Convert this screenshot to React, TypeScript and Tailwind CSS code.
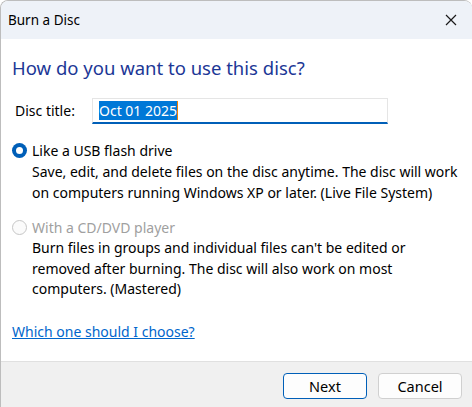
import React from "react";

const font = { fontFamily: '"Noto Sans", "Segoe UI", sans-serif' };

function RadioOn() {
  return (
    <span className="w-[15px] h-[15px] rounded-full bg-[#005fb8] flex items-center justify-center shrink-0">
      <span className="w-[7px] h-[7px] rounded-full bg-white" />
    </span>
  );
}

function RadioOff() {
  return <span className="w-[15px] h-[15px] rounded-full border border-[#c6c6c6] bg-[#fbfbfb] shrink-0" />;
}

export default function App() {
  return (
    <div
      className="w-[472px] h-[407px] flex flex-col bg-white rounded-t-[8px] border-t border-l border-[#bdbdbd] overflow-hidden text-[14px] text-black"
      style={font}
    >
      <div className="h-[38px] shrink-0 flex items-center justify-between pl-[7px] pr-[11px] bg-[#eef2f8]">
        <span className="text-[13.5px]">Burn a Disc</span>
        <svg width="12" height="12" viewBox="0 0 12 12" className="mr-[4px]">
          <path d="M1 1 L11 11 M11 1 L1 11" stroke="#1a1a1a" strokeWidth="1.2" />
        </svg>
      </div>

      <div className="flex-1 flex flex-col pl-[11px] pr-[8px]">
        <div className="mt-[15px] text-[18.5px] leading-[28px] text-[#1c3796]">How do you want to use this disc?</div>

        <div className="mt-[16px] flex items-center">
          <span className="ml-[3px] w-[77px] leading-[20px]">Disc title:</span>
          <div className="w-[296px] h-[26px] border border-[#e5e5e5] border-b-2 border-b-[#005fb8] flex items-center pl-[6px]">
            <span className="bg-[#0078d7] text-white leading-[19px] border-r border-[#f08000] text-[14px]">Oct 01 2025</span>
          </div>
        </div>

        <div className="mt-[16px] flex flex-col">
          <div className="flex items-center gap-[5px] leading-[21px]">
            <RadioOn />
            <span>Like a USB flash drive</span>
          </div>
          <div className="pl-[20px] leading-[21px]">
            Save, edit, and delete files on the disc anytime. The disc will work
            <br />
            on computers running Windows XP or later. (Live File System)
          </div>
        </div>

        <div className="mt-[14px] flex flex-col">
          <div className="flex items-center gap-[5px] leading-[21px] text-[#a0a0a0]">
            <RadioOff />
            <span>With a CD/DVD player</span>
          </div>
          <div className="pl-[20px] leading-[20.5px]">
            Burn files in groups and individual files can't be edited or
            <br />
            removed after burning. The disc will also work on most
            <br />
            computers. (Mastered)
          </div>
        </div>

        <a className="mt-[21px] text-[#0066cc] underline leading-[21px] w-fit">Which one should I choose?</a>
      </div>

      <div className="h-[46px] shrink-0 border-t border-[#e0e0e0] bg-[#f0f0f0] flex items-start justify-end gap-[11px] pr-[10px] pt-[11px]">
        <button className="w-[84px] h-[26px] rounded-[4px] bg-[#fdfdfd] border border-[#005fb8] text-[14.5px] leading-none">Next</button>
        <button className="w-[84px] h-[26px] rounded-[4px] bg-[#fdfdfd] border border-[#d0d0d0] text-[14.5px] leading-none">Cancel</button>
      </div>
    </div>
  );
}
